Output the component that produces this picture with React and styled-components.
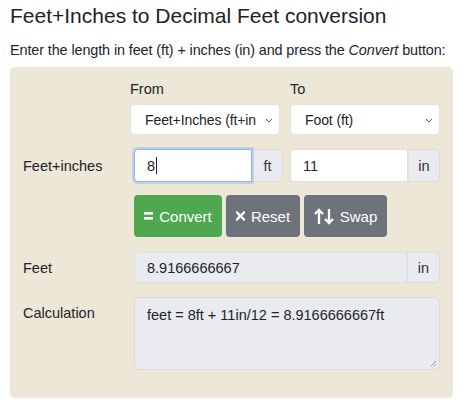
import React from 'react'
import styled, { createGlobalStyle } from 'styled-components'

const Global = createGlobalStyle`
  body {
    margin: 0;
    background: #fff;
    font-family: "Liberation Sans", Arial, sans-serif;
    color: #212529;
  }
`

const Page = styled.div`
  padding: 3px 10px 0 10px;
  width: 443px;
`

const Title = styled.h1`
  margin: 0;
  font-size: 21px;
  font-weight: 400;
  line-height: 26px;
  color: #222;
`

const Intro = styled.p`
  margin: 11px 0 7px 0;
  font-size: 14.4px;
  line-height: 20px;
  letter-spacing: -0.1px;
`

const Panel = styled.div`
  background: #ede7d7;
  border-radius: 5px;
  padding: 13px 13px 28px 13px;
  display: grid;
  grid-template-columns: 111px 1fr;
  align-items: center;
  row-gap: 14px;
`

const Label = styled.div`
  font-size: 14.5px;
  align-self: ${p => (p.top ? 'start' : 'center')};
  padding-top: ${p => (p.top ? '8px' : '0')};
`

const Pair = styled.div`
  display: grid;
  grid-template-columns: ${p => p.cols || '150px 150px'};
  column-gap: ${p => p.gap || '10px'};
  margin-left: ${p => p.shift || '0'};
`

const HeadRow = styled(Pair)`
  margin-bottom: -8px;
`

const ColHead = styled.div`
  font-size: 14.5px;
  line-height: 18px;
`

const SelectBox = styled.div`
  position: relative;
  height: 31px;
  background: #fff;
  border-radius: 4px;
  border: 1px solid #e6e2d6;
  box-sizing: border-box;
  display: flex;
  align-items: center;
  padding: 0 20px 0 14px;
  font-size: 14px;
  letter-spacing: -0.1px;
  white-space: nowrap;
  overflow: hidden;
`

const SelectText = styled.span`
  overflow: hidden;
`

const Chevron = styled.svg`
  position: absolute;
  right: 6px;
  top: 13px;
`

const Group = styled.div`
  display: flex;
  height: ${p => p.h || '33px'};
`

const Field = styled.div`
  flex: 1;
  box-sizing: border-box;
  display: flex;
  align-items: center;
  padding-left: 12px;
  font-size: 14.5px;
  background: ${p => (p.readOnly ? '#e9ebef' : '#fff')};
  border: 1px solid ${p => (p.focus ? '#86b7fe' : '#e2dfd6')};
  border-radius: 4px 0 0 4px;
  box-shadow: ${p => (p.focus ? '0 0 0 2px rgba(120, 160, 230, 0.35)' : 'none')};
  position: relative;
  z-index: ${p => (p.focus ? 1 : 0)};
`

const Caret = styled.span`
  display: inline-block;
  width: 1px;
  height: 17px;
  background: #222;
  margin-left: 1px;
`

const Addon = styled.div`
  width: ${p => p.w || '31px'};
  box-sizing: border-box;
  display: flex;
  align-items: center;
  justify-content: center;
  background: #e9ebef;
  border: 1px solid #dedcd6;
  border-left: 1px solid #e0e0e0;
  border-radius: 0 4px 4px 0;
  font-size: 14.5px;
  color: #333;
`

const Buttons = styled.div`
  display: flex;
  gap: 4px;
  margin: -1px 0 1px 0;
`

const Button = styled.div`
  height: 42px;
  width: ${p => p.w};
  box-sizing: border-box;
  border-radius: 4px;
  background: ${p => (p.primary ? '#4ea84f' : '#6c737b')};
  color: #fff;
  font-size: 15px;
  display: flex;
  align-items: center;
  justify-content: center;
  gap: 6px;
`

const Calc = styled.div`
  position: relative;
  height: 73px;
  box-sizing: border-box;
  background: #e9ebef;
  border: 1px solid #dedcd6;
  border-radius: 4px;
  padding: 7px 12px;
  font-size: 14.5px;
  line-height: 20px;
`

const Grip = styled.svg`
  position: absolute;
  right: 2px;
  bottom: 2px;
`

function Select({ children }) {
  return (
    <SelectBox>
      <SelectText>{children}</SelectText>
      <Chevron width="8" height="5" viewBox="0 0 8 5">
        <path d="M1 1l3 3 3-3" fill="none" stroke="#666" strokeWidth="1" />
      </Chevron>
    </SelectBox>
  )
}

export default function App() {
  return (
    <Page>
      <Global />
      <Title>Feet+Inches to Decimal Feet conversion</Title>
      <Intro>
        Enter the length in feet (ft) + inches (in) and press the <i>Convert</i> button:
      </Intro>
      <Panel>
        <div />
        <HeadRow shift="-4px">
          <ColHead>From</ColHead>
          <ColHead>To</ColHead>
        </HeadRow>

        <div />
        <Pair shift="-4px">
          <Select>Feet+Inches (ft+in</Select>
          <Select>Foot (ft)</Select>
        </Pair>

        <Label>Feet+inches</Label>
        <Pair cols="149px 150px" gap="7px">
          <Group>
            <Field focus>
              8<Caret />
            </Field>
            <Addon>ft</Addon>
          </Group>
          <Group>
            <Field>11</Field>
            <Addon w="32px">in</Addon>
          </Group>
        </Pair>

        <div />
        <Buttons>
          <Button primary w="88px">
            <svg width="9" height="8" viewBox="0 0 9 8">
              <rect x="0" y="0" width="9" height="2.6" fill="#fff" />
              <rect x="0" y="5" width="9" height="2.6" fill="#fff" />
            </svg>
            Convert
          </Button>
          <Button w="74px">
            <svg width="9" height="10" viewBox="0 0 9 10">
              <path d="M1 1.5l7 7M8 1.5l-7 7" stroke="#fff" strokeWidth="2.4" strokeLinecap="square" />
            </svg>
            Reset
          </Button>
          <Button w="83px">
            <svg width="20" height="17" viewBox="0 0 20 17">
              <path d="M5 16V2M1 6l4-4 4 4" fill="none" stroke="#fff" strokeWidth="2.3" />
              <path d="M15 1v14M11 11l4 4 4-4" fill="none" stroke="#fff" strokeWidth="2.3" />
            </svg>
            Swap
          </Button>
        </Buttons>

        <Label>Feet</Label>
        <Group h="31px">
          <Field readOnly>8.9166666667</Field>
          <Addon w="33px">in</Addon>
        </Group>

        <Label top>Calculation</Label>
        <Calc>
          feet = 8ft + 11in/12 = 8.9166666667ft
          <Grip width="8" height="8" viewBox="0 0 8 8">
            <path d="M7 2L2 7M7 5L5 7" stroke="#888" strokeWidth="0.8" />
          </Grip>
        </Calc>
      </Panel>
    </Page>
  )
}
